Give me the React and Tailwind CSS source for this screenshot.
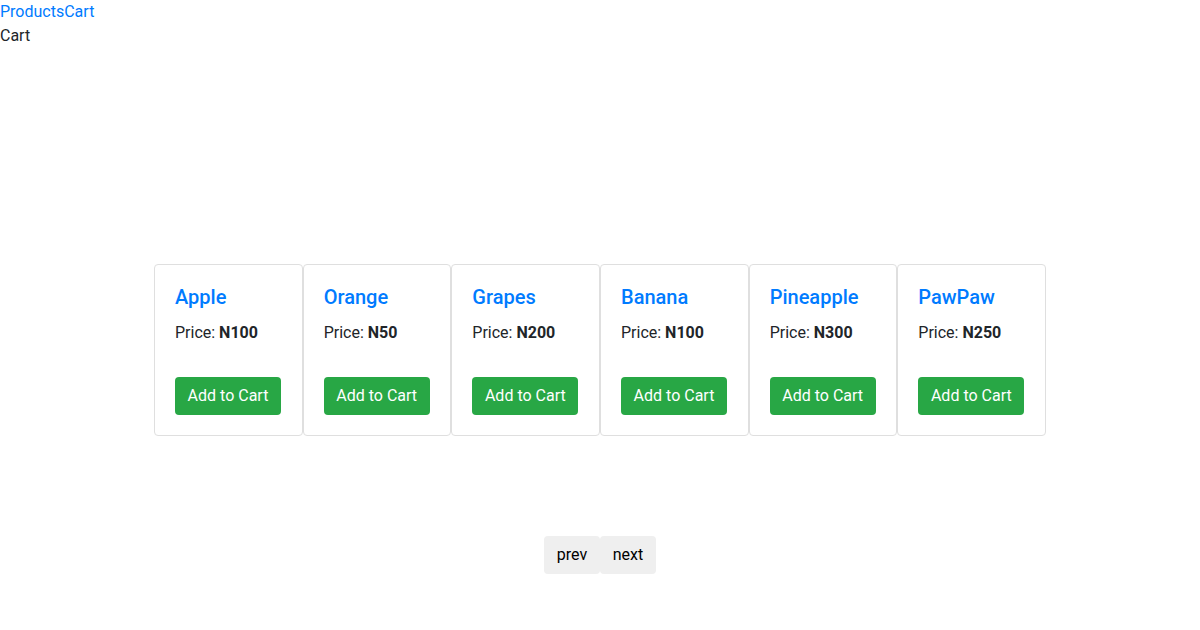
const products = [
  { name: "Apple", price: 100 },
  { name: "Orange", price: 50 },
  { name: "Grapes", price: 200 },
  { name: "Banana", price: 100 },
  { name: "Pineapple", price: 300 },
  { name: "PawPaw", price: 250 },
];

const ProductCard = ({ product }) => (
  <div className="border border-[#dfdfdf] rounded-[4px] bg-white p-5">
    <h5 className="text-[20px] leading-[24px] font-medium text-[#007bff] mb-3">{product.name}</h5>
    <p className="text-base leading-6 text-[#212529] mb-8">
      Price: <b className="font-bold">N{product.price}</b>
    </p>
    <button className="h-[38px] w-[106px] rounded-[4px] bg-[#28a745] text-white text-base leading-6">
      Add to Cart
    </button>
  </div>
);

export default function App() {
  return (
    <div className="min-h-[630px] bg-white text-[#212529] font-['Roboto',sans-serif]">
      <nav className="text-base leading-6">
        <div>
          <a href="#" className="text-[#007bff]">Products</a>
          <a href="#" className="text-[#007bff]">Cart</a>
        </div>
        <div>Cart</div>
      </nav>

      <div className="mt-[216px] flex justify-center">
        <div className="w-[892px] grid grid-cols-6">
          {products.map((p) => (
            <ProductCard key={p.name} product={p} />
          ))}
        </div>
      </div>

      <div className="mt-[100px] flex justify-center">
        <button className="h-[38px] w-[56px] rounded-[4px] bg-[#efefef] text-black text-base">prev</button>
        <button className="h-[38px] w-[56px] rounded-[4px] bg-[#efefef] text-black text-base">next</button>
      </div>
    </div>
  );
}
